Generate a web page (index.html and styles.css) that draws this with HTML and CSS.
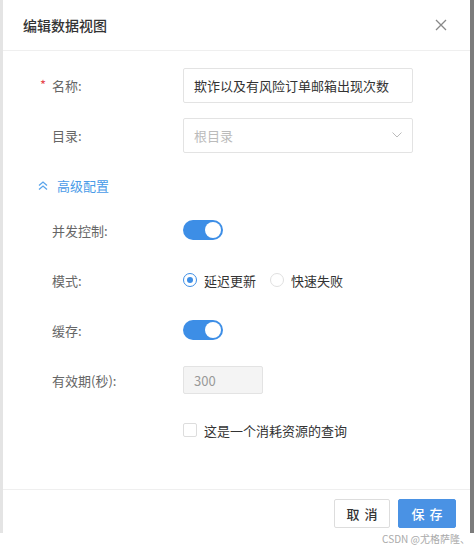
FILE: index.html
```html
<!DOCTYPE html>
<html lang="zh-CN">

<head>
  <meta charset="UTF-8">
  <meta name="viewport" content="width=device-width, initial-scale=1.0">
  <title>编辑数据视图</title>
  <link rel="stylesheet" href="styles.css">
</head>

<body>
  <div class="dialog">
    <div class="dialog-header">
      <span class="title">编辑数据视图</span>
      <span class="close">
        <svg width="12" height="12" viewBox="0 0 12 12"><path d="M1 1L11 11M11 1L1 11" stroke="#888" stroke-width="1.3" fill="none"/></svg>
      </span>
    </div>
    <div class="dialog-body">
      <div class="row">
        <label class="label"><span class="star">*</span>名称:</label>
        <div class="field">
          <input type="text" class="input" value="欺诈以及有风险订单邮箱出现次数">
        </div>
      </div>
      <div class="row">
        <label class="label">目录:</label>
        <div class="field">
          <div class="select">
            <span class="placeholder">根目录</span>
            <svg width="10" height="6" viewBox="0 0 10 6"><path d="M0.5 0.5L5 5L9.5 0.5" stroke="#bbb" stroke-width="1" fill="none"/></svg>
          </div>
        </div>
      </div>
      <div class="row adv">
        <svg class="adv-icon" width="10" height="9" viewBox="0 0 10 9"><path d="M1 4.5L5 1L9 4.5M1 8.5L5 5L9 8.5" stroke="#5aa5ec" stroke-width="1.3" fill="none"/></svg>
        <span>高级配置</span>
      </div>
      <div class="adv-body">
        <div class="row">
          <label class="label">并发控制:</label>
          <div class="field"><span class="switch on"></span></div>
        </div>
        <div class="row">
          <label class="label">模式:</label>
          <div class="field">
            <span class="radio checked"></span><span class="opt">延迟更新</span>
            <span class="radio"></span><span class="opt">快速失败</span>
          </div>
        </div>
        <div class="row">
          <label class="label">缓存:</label>
          <div class="field"><span class="switch on"></span></div>
        </div>
        <div class="row">
          <label class="label">有效期(秒):</label>
          <div class="field">
            <input type="text" class="input small" value="300" disabled>
          </div>
        </div>
        <div class="row">
          <label class="label"></label>
          <div class="field">
            <span class="checkbox"></span><span class="opt">这是一个消耗资源的查询</span>
          </div>
        </div>
      </div>
    </div>
    <div class="dialog-footer">
      <button class="btn btn-default">取消</button>
      <button class="btn btn-primary">保存</button>
    </div>
  </div>
  <div class="mark">CSDN @尤格萨隆、</div>
</body>

</html>
```

FILE: styles.css
```css
* {
  box-sizing: border-box;
  padding: 0;
  margin: 0;
}

html,
body {
  width: 100%;
  height: 100%;
  background-color: #fff;
  font-family: "Noto Sans CJK SC", "Noto Sans", sans-serif;
  font-size: 13px;
  color: #666;
}

.dialog {
  width: 474px;
  height: 533px;
  border-left: 3px solid #e4e4e4;
  border-right: 4px solid #7c7c7c;
  display: flex;
  flex-direction: column;
}

.dialog-header {
  height: 51px;
  display: flex;
  align-items: center;
  justify-content: space-between;
  padding: 0 23px 0 20px;
  border-bottom: 1px solid #efefef;
}

.dialog-header .title {
  font-size: 14px;
  font-weight: 500;
  color: #333;
}

.dialog-header .close {
  display: flex;
}

.dialog-body {
  flex: 1;
  padding-top: 9px;
}

.row {
  height: 50px;
  display: flex;
  align-items: center;
}

.label {
  width: 180px;
  padding-left: 49px;
  color: #666;
  position: relative;
}

.label .star {
  position: absolute;
  left: 37px;
  top: -1px;
  color: #e5484d;
}

.field {
  display: flex;
  align-items: center;
}

.input {
  width: 230px;
  height: 35px;
  border: 1px solid #e3e3e3;
  border-radius: 2px;
  padding: 0 10px;
  font-family: inherit;
  font-size: 13px;
  color: #333;
  outline: none;
}

.input.small {
  width: 80px;
  height: 28px;
  background-color: #f4f4f4;
  color: #999;
}

.select {
  width: 230px;
  height: 35px;
  border: 1px solid #e3e3e3;
  border-radius: 2px;
  padding: 0 10px;
  display: flex;
  align-items: center;
  justify-content: space-between;
}

.select .placeholder {
  color: #bbb;
}

.adv {
  padding-left: 35px;
  color: #4a9be8;
}

.adv-icon {
  margin-right: 9px;
}

.adv-body {
  margin-top: -5px;
}

.switch {
  width: 40px;
  height: 20px;
  border-radius: 10px;
  background-color: #3d8ee6;
  position: relative;
}

.switch::after {
  content: "";
  position: absolute;
  right: 2px;
  top: 2px;
  width: 16px;
  height: 16px;
  border-radius: 50%;
  background-color: #fff;
}

.radio {
  width: 14px;
  height: 14px;
  border: 1px solid #e0e0e0;
  border-radius: 50%;
  position: relative;
}

.radio.checked {
  border-color: #3d8ee6;
}

.radio.checked::after {
  content: "";
  position: absolute;
  left: 3px;
  top: 3px;
  width: 6px;
  height: 6px;
  border-radius: 50%;
  background-color: #3d8ee6;
}

.checkbox {
  width: 14px;
  height: 14px;
  border: 1px solid #ddd;
  border-radius: 2px;
}

.opt {
  margin-left: 7px;
  margin-right: 14px;
  color: #333;
}

.dialog-footer {
  height: 44px;
  border-top: 1px solid #efefef;
  display: flex;
  justify-content: flex-end;
  align-items: flex-start;
  padding: 9px 14px 0 0;
  gap: 8px;
}

.btn {
  height: 29px;
  padding: 0;
  font-family: inherit;
  font-size: 13px;
  font-weight: 500;
  letter-spacing: 5px;
  text-indent: 5px;
  white-space: nowrap;
  border: 1px solid transparent;
  border-radius: 2px;
}

.btn-default {
  width: 56px;
  color: #333;
  background-color: #fff;
  border-color: #ddd;
}

.btn-primary {
  width: 58px;
  color: #fff;
  background-color: #4a92e4;
  border-color: #4a92e4;
}

.mark {
  width: 474px;
  padding-right: 4px;
  text-align: right;
  font-size: 10px;
  line-height: 12px;
  color: #aaa;
}
```
